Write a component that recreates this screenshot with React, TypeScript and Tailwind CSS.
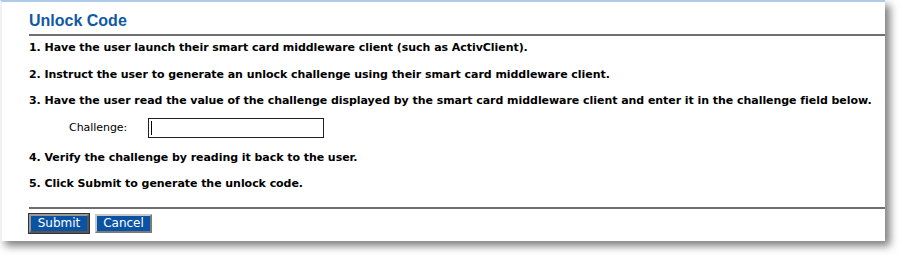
import React from "react";

const steps1 = [
  "1. Have the user launch their smart card middleware client (such as ActivClient).",
  "2. Instruct the user to generate an unlock challenge using their smart card middleware client.",
  "3. Have the user read the value of the challenge displayed by the smart card middleware client and enter it in the challenge field below.",
];

export default function App() {
  const font = "font-['DejaVu_Sans',sans-serif]";
  return (
    <div className="w-[901px] h-[257px] bg-white relative overflow-hidden">
      <div className="w-[885px] h-[241px] bg-white border-t-2 border-l-2 border-t-[#aecbe9] border-l-[#f1f1f1] shadow-[5px_5px_8px_rgba(0,0,0,0.5)] flex flex-col pl-[27px]">
        <div className="pt-[9px] h-[32px] text-[16px] leading-[20px] font-bold text-[#0f5aa6] font-['Liberation_Sans',Arial,sans-serif]">
          Unlock Code
        </div>
        <div className="h-[2px] bg-[#6f6f6f]" />
        <div className={`${font} text-[11px] text-black tracking-[-0.05px]`}>
          <div className="mt-[5px] h-[14px] leading-[14px] font-bold whitespace-nowrap">{steps1[0]}</div>
          <div className="mt-[13px] h-[14px] leading-[14px] font-bold whitespace-nowrap">{steps1[1]}</div>
          <div className="mt-[12px] h-[14px] leading-[14px] font-bold whitespace-nowrap">{steps1[2]}</div>
          <div className="mt-[10px] h-[20px] flex items-center">
            <span className="ml-[40px] w-[79px]">Challenge:</span>
            <div className="w-[176px] h-[20px] border border-[#222] bg-white flex items-center pl-[2px]">
              <div className="w-px h-[14px] bg-black" />
            </div>
          </div>
          <div className="mt-[13px] h-[14px] leading-[14px] font-bold whitespace-nowrap">4. Verify the challenge by reading it back to the user.</div>
          <div className="mt-[12px] h-[14px] leading-[14px] font-bold whitespace-nowrap">5. Click Submit to generate the unlock code.</div>
        </div>
        <div className="mt-[16px] h-[2px] bg-[#6f6f6f]" />
        <div className={`mt-[5px] flex gap-[6px] ${font} text-[12px]`}>
          <button className="w-[60px] h-[19px] bg-[#0a52a3] text-white leading-[13px] border-2 border-t-[#9a9a9a] border-l-[#9a9a9a] border-r-[#555] border-b-[#555] outline outline-1 outline-[#333]">
            Submit
          </button>
          <button className="w-[57px] h-[19px] bg-[#0a52a3] text-white leading-[13px] border-2 border-t-[#c8c8c8] border-l-[#c8c8c8] border-r-[#7a7a7a] border-b-[#7a7a7a]">
            Cancel
          </button>
        </div>
      </div>
    </div>
  );
}
